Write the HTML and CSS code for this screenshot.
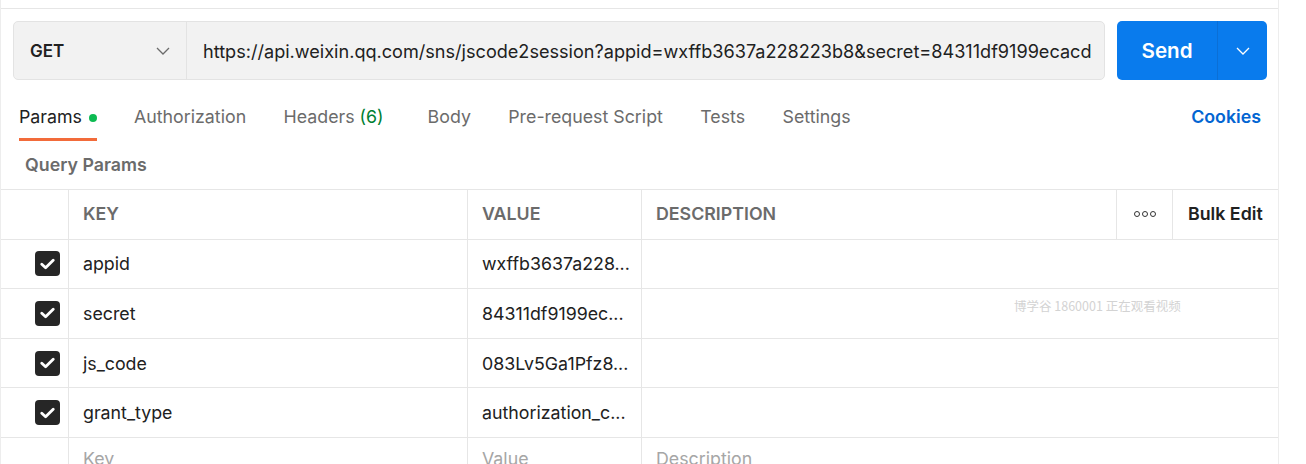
FILE: index.html
```html
<!DOCTYPE html>
<html>
<head>
<meta charset="utf-8">
<link rel="stylesheet" href="styles.css">
</head>
<body>
<div class="pane">
  <div class="topstrip"></div>
  <div class="urlrow">
    <div class="urlbox">
      <div class="method">
        <span class="method-text">GET</span>
        <svg class="chev" width="14" height="8" viewBox="0 0 14 8"><path d="M1 1 L7 7 L13 1" fill="none" stroke="#6b6b6b" stroke-width="1.3"/></svg>
      </div>
      <div class="url">https://api.weixin.qq.com/sns/jscode2session?appid=wxffb3637a228223b8&amp;secret=84311df9199ecacd</div>
    </div>
    <div class="send">
      <span class="send-main">Send</span>
      <span class="send-more"><svg width="14" height="8" viewBox="0 0 14 8"><path d="M1 1 L7 7 L13 1" fill="none" stroke="#ffffff" stroke-width="1.3"/></svg></span>
    </div>
  </div>
  <div class="tabs">
    <div class="tab active">Params<span class="dot"></span></div>
    <div class="tab">Authorization</div>
    <div class="tab tab-headers">Headers <span class="count">(6)</span></div>
    <div class="tab">Body</div>
    <div class="tab">Pre-request Script</div>
    <div class="tab">Tests</div>
    <div class="tab">Settings</div>
    <div class="tab-spacer"></div>
    <div class="cookies">Cookies</div>
  </div>
  <div class="section-title">Query Params</div>
  <div class="table">
    <div class="row head">
      <div class="cell c-check"></div>
      <div class="cell c-key">KEY</div>
      <div class="cell c-val">VALUE</div>
      <div class="cell c-desc">DESCRIPTION</div>
      <div class="cell c-more"><span class="dots"><i></i><i></i><i></i></span></div>
      <div class="cell c-bulk">Bulk Edit</div>
    </div>
    <div class="row data">
      <div class="cell c-check"><span class="cb"><svg width="15" height="12" viewBox="0 0 15 12"><path d="M1.8 6.2 L5.6 9.8 L13.2 2.2" fill="none" stroke="#fff" stroke-width="2.8" stroke-linecap="round" stroke-linejoin="round"/></svg></span></div>
      <div class="cell c-key">appid</div>
      <div class="cell c-val">wxffb3637a228...</div>
      <div class="cell c-desc2"></div>
    </div>
    <div class="row data">
      <div class="cell c-check"><span class="cb"><svg width="15" height="12" viewBox="0 0 15 12"><path d="M1.8 6.2 L5.6 9.8 L13.2 2.2" fill="none" stroke="#fff" stroke-width="2.8" stroke-linecap="round" stroke-linejoin="round"/></svg></span></div>
      <div class="cell c-key">secret</div>
      <div class="cell c-val">84311df9199ec...</div>
      <div class="cell c-desc2"></div>
    </div>
    <div class="row data">
      <div class="cell c-check"><span class="cb"><svg width="15" height="12" viewBox="0 0 15 12"><path d="M1.8 6.2 L5.6 9.8 L13.2 2.2" fill="none" stroke="#fff" stroke-width="2.8" stroke-linecap="round" stroke-linejoin="round"/></svg></span></div>
      <div class="cell c-key">js_code</div>
      <div class="cell c-val">083Lv5Ga1Pfz8...</div>
      <div class="cell c-desc2"></div>
    </div>
    <div class="row data">
      <div class="cell c-check"><span class="cb"><svg width="15" height="12" viewBox="0 0 15 12"><path d="M1.8 6.2 L5.6 9.8 L13.2 2.2" fill="none" stroke="#fff" stroke-width="2.8" stroke-linecap="round" stroke-linejoin="round"/></svg></span></div>
      <div class="cell c-key">grant_type</div>
      <div class="cell c-val">authorization_c...</div>
      <div class="cell c-desc2"></div>
    </div>
    <div class="row data last">
      <div class="cell c-check"></div>
      <div class="cell c-key ph">Key</div>
      <div class="cell c-val ph">Value</div>
      <div class="cell c-desc2 ph">Description</div>
    </div>
  </div>
  <div class="watermark">博学谷 1860001 正在观看视频</div>
</div>
</body>
</html>
```

FILE: styles.css
```css
* { box-sizing: border-box; }
html, body { margin: 0; padding: 0; background: #ffffff; }
body {
  font-family: Inter, "Noto Sans", "Noto Sans CJK SC", sans-serif;
  font-size: 17.8px;
  color: #212121;
  height: 464px;
  overflow: hidden;
}
.pane {
  position: relative;
  width: 1279px;
  height: 464px;
  overflow: hidden;
  border-left: 1px solid #ededed;
  border-right: 1px solid #ededed;
}
.topstrip {
  height: 9px;
  border-bottom: 1px solid #e6e6e6;
}
.urlrow {
  display: flex;
  gap: 12px;
  padding: 12px 11px 0 12px;
  height: 71px;
}
.urlbox {
  flex: 1;
  display: flex;
  background: #f2f2f2;
  border: 1px solid #e3e3e3;
  border-radius: 5px;
  height: 59px;
}
.method {
  width: 173px;
  display: flex;
  align-items: center;
  justify-content: space-between;
  padding: 0 16px 0 16px;
  border-right: 1px solid #e3e3e3;
  font-size: 17px;
}
.method-text { font-weight: 600; color: #212121; }
.chev { margin-top: 1px; }
.url {
  flex: 1;
  display: flex;
  align-items: center;
  padding-left: 16px;
  white-space: nowrap;
  overflow: hidden;
  color: #212121;
  font-size: 18.1px;
}
.send {
  width: 150px;
  height: 59px;
  display: flex;
  background: #097bed;
  border-radius: 5px;
  color: #ffffff;
}
.send-main {
  width: 101px;
  display: flex;
  align-items: center;
  justify-content: center;
  font-weight: 600;
  font-size: 20.6px;
  border-right: 1px solid #0b6fd6;
}
.send-more {
  flex: 1;
  display: flex;
  align-items: center;
  justify-content: center;
}
.tabs {
  display: flex;
  margin-top: 20px;
  padding: 0 17px 0 18px;
  height: 41px;
}
.tab {
  padding: 6px 0 10px;
  line-height: 22px;
  border-bottom: 3px solid transparent;
  color: #6b6b6b;
  margin-right: 37.4px;
  display: flex;
  align-items: center;
  height: 41px;
}
.tab.active { color: #212121; border-bottom-color: #f26b3a; margin-right: 37px; }
.tab-headers { margin-right: 44px; }
.dot {
  width: 8px;
  height: 8px;
  border-radius: 50%;
  background: #0cbb52;
  margin-left: 7px;
  margin-top: 1px;
}
.count { color: #007f31; margin-left: 5px; }
.tab-spacer { flex: 1; }
.cookies {
  color: #0265d2;
  font-weight: 600;
  line-height: 22px;
  padding-top: 6px;
}
.section-title {
  margin: 13px 0 13px 24px;
  line-height: 22px;
  color: #6b6b6b;
  font-weight: 600;
}
.table {
  border-top: 1px solid #e6e6e6;
}
.row {
  display: flex;
  height: 49.6px;
  border-bottom: 1px solid #e6e6e6;
}
.cell {
  display: flex;
  align-items: center;
  padding-left: 14px;
  white-space: nowrap;
  overflow: hidden;
}
.c-check { width: 67px; padding-left: 0; justify-content: flex-end; padding-right: 8px; }
.c-key { width: 399px; border-left: 1px solid #e6e6e6; }
.c-val { width: 174px; border-left: 1px solid #e6e6e6; }
.c-desc { width: 475px; border-left: 1px solid #e6e6e6; }
.c-desc2 { flex: 1; border-left: 1px solid #e6e6e6; }
.c-more { width: 56px; border-left: 1px solid #e6e6e6; justify-content: center; padding-left: 0; }
.c-bulk { flex: 1; border-left: 1px solid #e6e6e6; padding-left: 15px; font-weight: 600; color: #212121; }
.head .c-key, .head .c-val, .head .c-desc { color: #6b6b6b; font-weight: 600; }
.head .cell { padding-bottom: 1px; }
.last .cell { align-items: flex-start; padding-top: 10px; }
.dots { display: flex; gap: 2px; }
.dots i {
  display: block;
  width: 6px;
  height: 6px;
  border: 1.3px solid #333333;
  border-radius: 50%;
}
.cb {
  width: 25px;
  height: 25px;
  border-radius: 4px;
  background: #262626;
  display: flex;
  align-items: center;
  justify-content: center;
}
.ph { color: #a6a6a6; }
.watermark {
  position: absolute;
  left: 1013px;
  top: 296px;
  font-size: 12.5px;
  color: #d3d3d3;
  font-family: "Noto Sans CJK SC", sans-serif;
}
```
